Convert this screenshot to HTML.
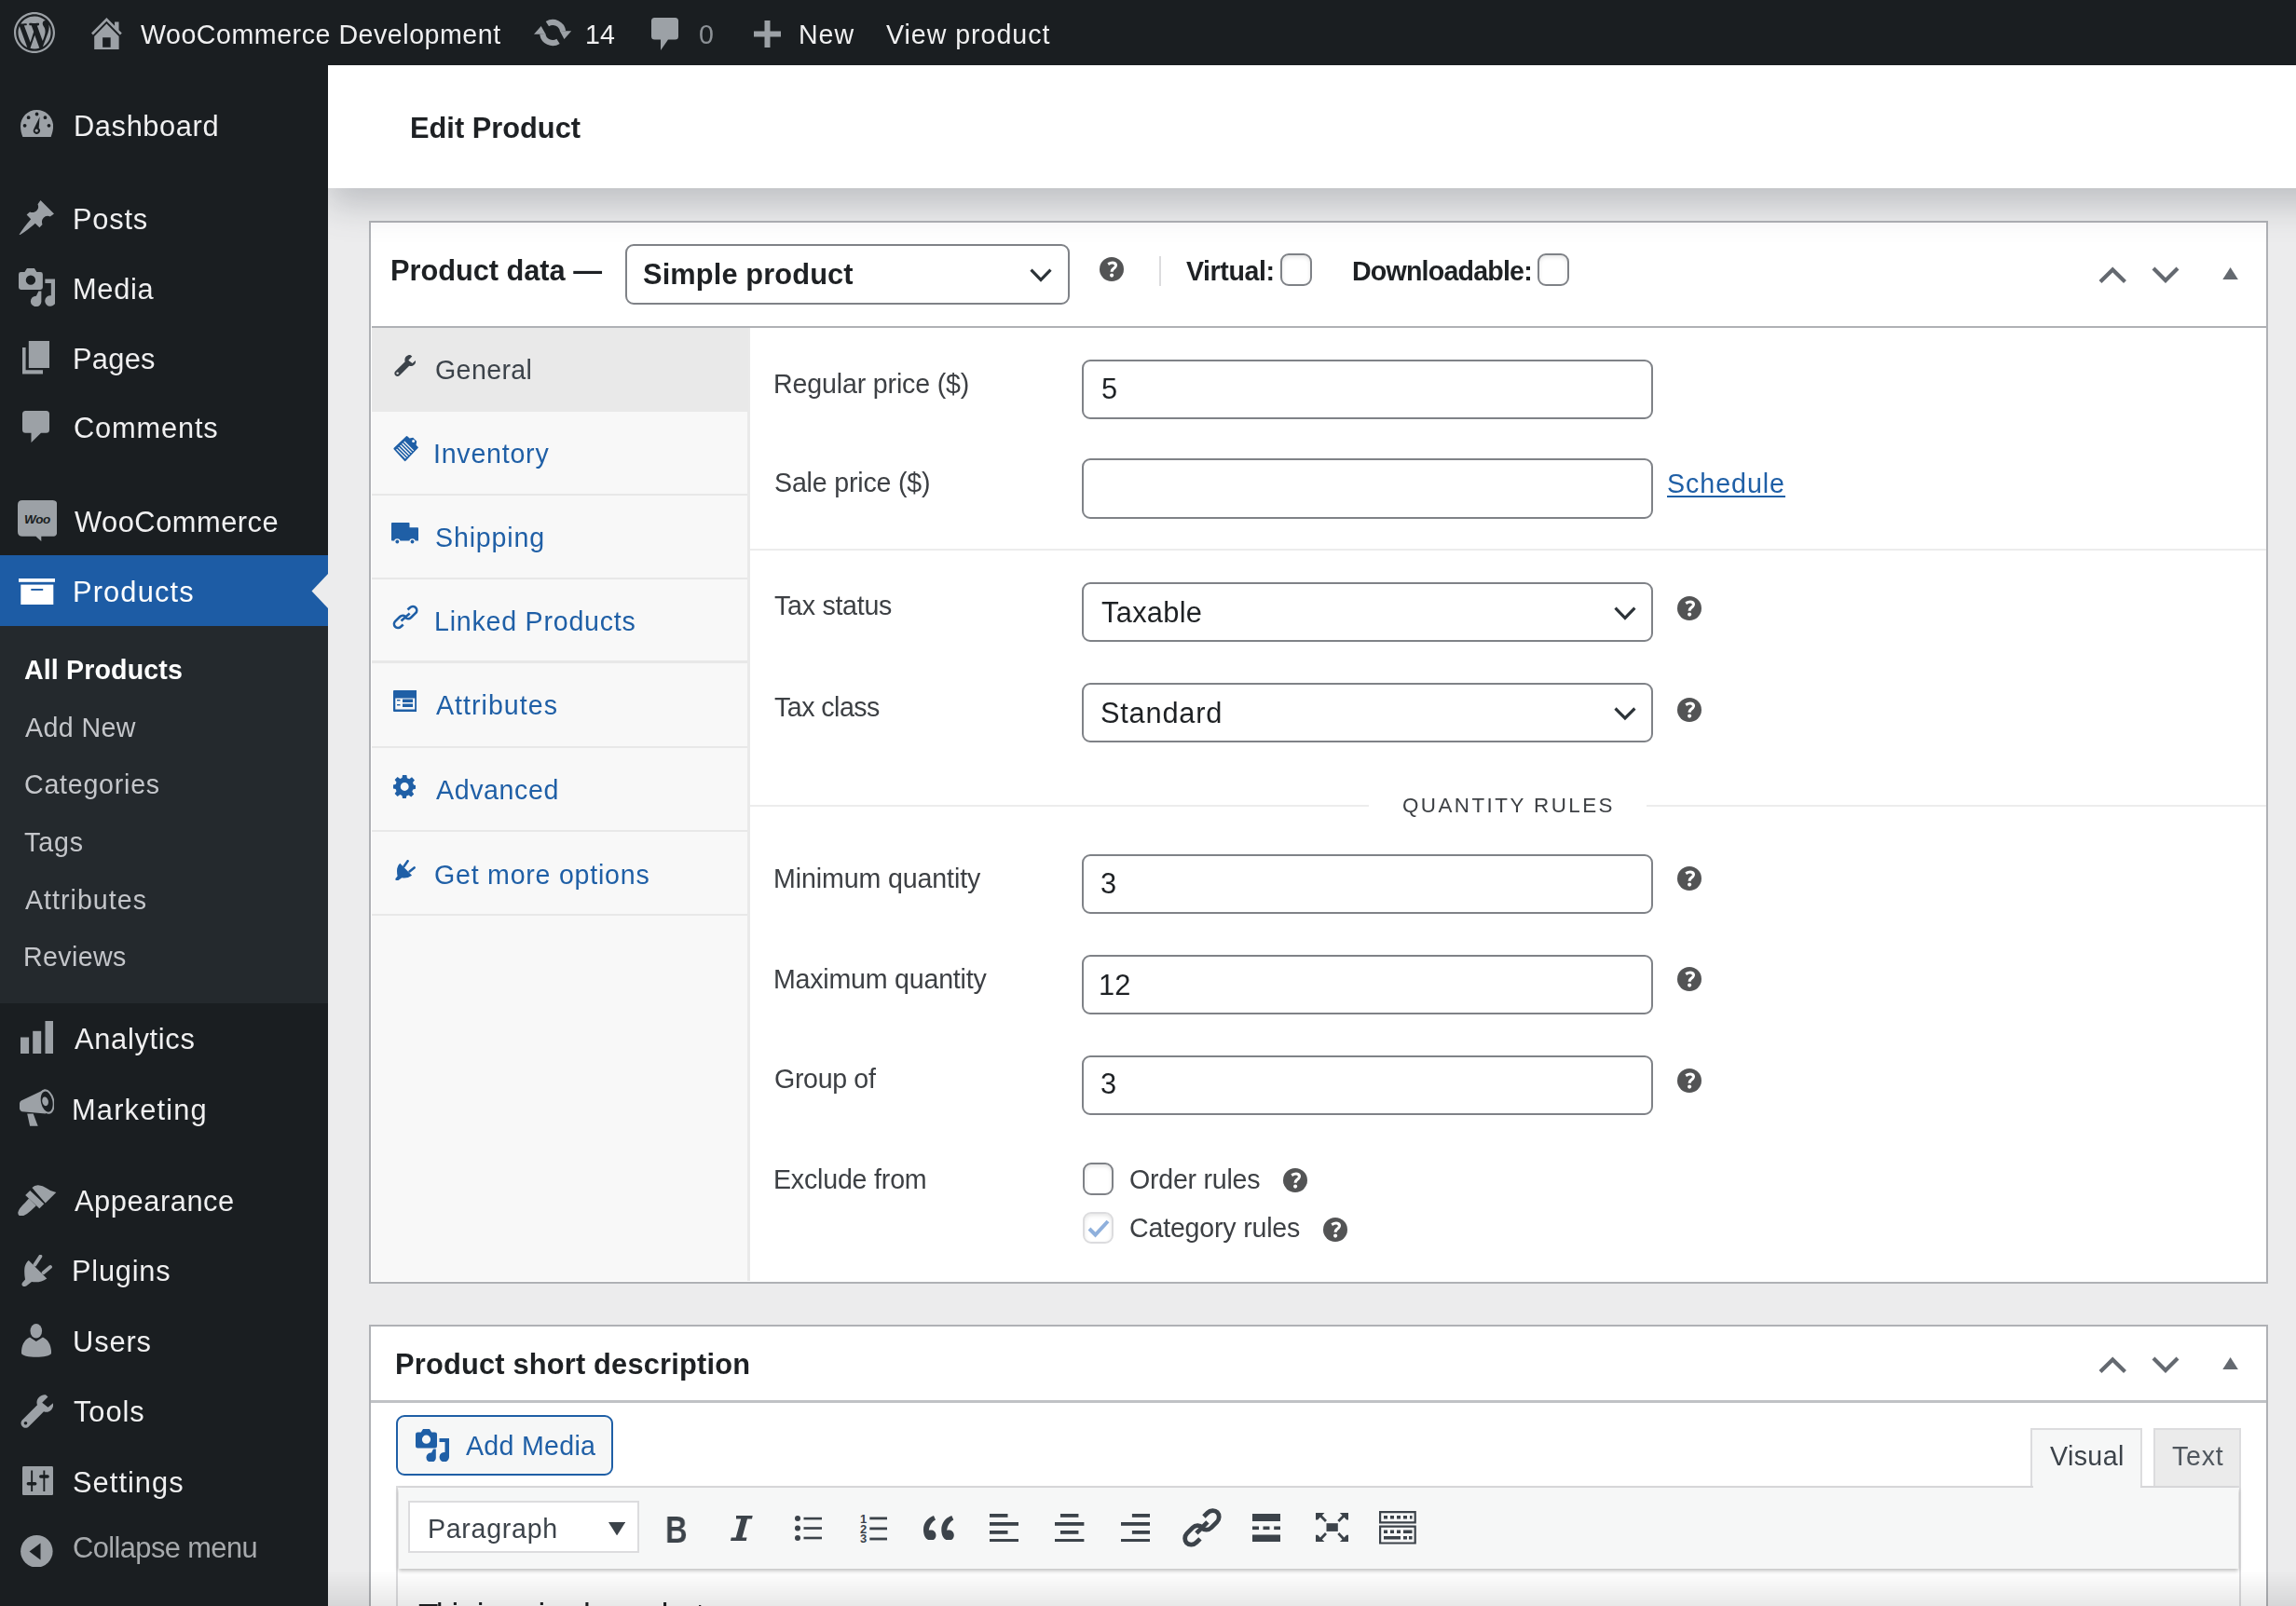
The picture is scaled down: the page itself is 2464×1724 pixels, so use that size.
<!DOCTYPE html>
<html><head><meta charset="utf-8"><style>
html,body{margin:0;padding:0;width:2464px;height:1724px;overflow:hidden;background:#ececed;font-family:"Liberation Sans",sans-serif}
.a{position:absolute;display:block}
.t{position:absolute;white-space:nowrap;line-height:1;will-change:transform}
</style></head><body>
<div style="position:absolute;left:0;top:0;z-index:10">
<div class="a" style="left:0.0px;top:0.0px;width:2464.0px;height:70.0px;background:#1a1e21"></div>
<div class="a" style="left:0.0px;top:70.0px;width:352.0px;height:1654.0px;background:#1a1e21"></div>
<div class="a" style="left:0.0px;top:672.0px;width:352.0px;height:404.5px;background:#24292d"></div>
<div class="a" style="left:0.0px;top:596.0px;width:352.0px;height:76.0px;background:#1d5ca5"></div>
<svg class="a" style="left:334px;top:616px;width:18px;height:37px" viewBox="0 0 18 37"><path d="M18 0 L0.5 18.5 L18 37 Z" fill="#ececed"/></svg>
<svg class="a" style="left:15.4px;top:12.8px;width:44.0px;height:44.0px;" viewBox="0 0 20 20" preserveAspectRatio="none" fill="#9ca1a6"><path d="M20 10c0-5.52-4.48-10-10-10S0 4.480 0 10s4.48 10 10 10 10-4.48 10-10zM10 1.01c4.970 0 8.99 4.02 8.99 8.99s-4.02 8.99-8.99 8.99S1.01 14.97 1.01 10 5.03 1.01 10 1.01zM8.01 14.82L4.96 6.61c.49-.03 1.05-.08 1.05-.08.43-.05.38-1.01-.06-.99 0 0-1.29.1-2.13.1-.15 0-.33 0-.52-.01 1.44-2.17 3.9-3.6 6.7-3.6 2.09 0 3.990.79 5.41 2.09-.6-.08-1.45.35-1.45 1.42 0 .66.38 1.22.79 1.88.31.54.5 1.22.5 2.21 0 1.34-1.27 4.48-1.27 4.48l-2.71-7.5c.48-.03.75-.16.75-.16.43-.05.38-1.1-.05-1.08 0 0-1.3.11-2.14.11-.78 0-2.11-.11-2.11-.11-.43-.02-.48 1.06-.05 1.08l.84.08 1.12 3.04zm6.02 2.15L16.64 10s.67-1.69.39-3.81c.63 1.14.94 2.42.94 3.81 0 2.96-1.56 5.58-3.94 6.970zM2.68 6.77L6.5 17.25c-2.67-1.3-4.47-4.08-4.47-7.25 0-1.16.2-2.23.65-3.23zm7.45 4.53l2.29 6.25c-.75.27-1.57.42-2.42.42-.72 0-1.41-.11-2.06-.3z"/></svg>
<svg class="a" style="left:97.8px;top:18.5px;width:32.8px;height:34.5px;" viewBox="0 0 33 34.5" preserveAspectRatio="none" fill="#9ca1a6"><path d="M16.5 0 L0 16.5 L1.9 18.4 L16.5 3.8 L31.1 18.4 L33 16.5 L29.7 13.2 L29.7 4.5 L25.2 4.5 L25.2 8.7 Z"/><path d="M16.5 6.6 L3.2 19.9 L3.2 34.5 L29.8 34.5 L29.8 19.9 Z M12.2 21.3 L20.8 21.3 L20.8 31.7 L12.2 31.7 Z" fill-rule="evenodd"/></svg>
<div class="t" style="left:150.9px;top:23.3px;font-size:28.6px;color:#f0f0f1;letter-spacing:0.53px;">WooCommerce Development</div>
<svg class="a" style="left:573.0px;top:19.9px;width:40.0px;height:30.1px;" viewBox="0 0 40 30" preserveAspectRatio="none" fill="#9ca1a6"><path d="M14.37 5.67 A11.0 11.0 0 0 1 31.09 13.47 M26.03 24.33 A11.0 11.0 0 0 1 9.31 16.53" fill="none" stroke="#9ca1a6" stroke-width="6.2"/><path d="M27.8 13.3 L40.2 13.3 L32.5 22 Z M12.6 16.7 L0 16.7 L7.7 8 Z"/></svg>
<div class="t" style="left:627.5px;top:22.8px;font-size:28.6px;color:#f0f0f1;letter-spacing:0.06px;">14</div>
<svg class="a" style="left:699.0px;top:19.0px;width:29.0px;height:35.0px;" viewBox="0 0 29 35" preserveAspectRatio="none" fill="#9ca1a6"><path d="M3.5 0 L25.5 0 Q29 0 29 3.5 L29 20 Q29 23.5 25.5 23.5 L18 23.5 L10 35 L10 23.5 L3.5 23.5 Q0 23.5 0 20 L0 3.5 Q0 0 3.5 0 Z"/></svg>
<div class="t" style="left:749.9px;top:22.8px;font-size:28.6px;color:#8c9196;">0</div>
<svg class="a" style="left:809.0px;top:22.0px;width:29.0px;height:29.0px;" viewBox="0 0 29 29" preserveAspectRatio="none" fill="#9ca1a6"><rect x="11.5" y="0" width="6" height="29"/><rect x="0" y="11.5" width="29" height="6"/></svg>
<div class="t" style="left:856.7px;top:22.8px;font-size:28.6px;color:#f0f0f1;letter-spacing:0.97px;">New</div>
<div class="t" style="left:950.9px;top:22.8px;font-size:28.6px;color:#f0f0f1;letter-spacing:0.96px;">View product</div>
<svg class="a" style="left:21.9px;top:118.3px;width:35.1px;height:28.9px;" viewBox="0 0 35 29" preserveAspectRatio="none" fill="#9ca1a6"><path fill-rule="evenodd" d="M17.5 0 C27.2 0 35 7.8 35 17.5 C35 21.6 34 25.5 32.6 29 L2.4 29 C1 25.5 0 21.6 0 17.5 C0 7.8 7.8 0 17.5 0 Z M17.5 2.6 A1.9 1.9 0 1 0 17.5 6.4 A1.9 1.9 0 1 0 17.5 2.6 Z M8.6 6.3 A1.9 1.9 0 1 0 8.6 10.1 A1.9 1.9 0 1 0 8.6 6.3 Z M26.4 6.3 A1.9 1.9 0 1 0 26.4 10.1 A1.9 1.9 0 1 0 26.4 6.3 Z M4.6 15 A1.9 1.9 0 1 0 4.6 18.8 A1.9 1.9 0 1 0 4.6 15 Z M30.4 15 A1.9 1.9 0 1 0 30.4 18.8 A1.9 1.9 0 1 0 30.4 15 Z M20.5 7.5 L19.6 19.5 A3.6 3.6 0 1 1 14 21 Z"/><circle cx="17.2" cy="22.3" r="1.6" fill="#9ca1a6"/></svg>
<div class="t" style="left:78.5px;top:120.5px;font-size:30.8px;color:#f0f0f1;letter-spacing:0.62px;">Dashboard</div>
<svg class="a" style="left:20.4px;top:214.6px;width:38.0px;height:37.9px;" viewBox="0 0 38 38" preserveAspectRatio="none" fill="#9ca1a6"><path d="M23.5 0 L38 14.5 L33.8 17.5 C31 16.2 28.5 17 26.8 18.8 C25 20.6 24.4 23.2 25.5 26 L22.4 29.4 L17.8 24.8 Q8 33.5 0 38 Q4.5 30 13.2 20.2 L8.6 15.6 L12 12.5 C14.8 13.6 17.4 13 19.2 11.2 C21 9.5 21.8 7 20.5 4.2 Z"/></svg>
<div class="t" style="left:77.9px;top:220.9px;font-size:30.8px;color:#f0f0f1;letter-spacing:0.79px;">Posts</div>
<svg class="a" style="left:19.7px;top:288.3px;width:39.8px;height:40.8px;" viewBox="0 0 40 41" preserveAspectRatio="none" fill="#9ca1a6"><path fill-rule="evenodd" d="M9 0 L17 0 L19.5 4 L23.5 4 Q26 4 26 6.5 L26 20.5 Q26 23 23.5 23 L2.5 23 Q0 23 0 20.5 L0 6.5 Q0 4 2.5 4 L6.5 4 Z M13 7.5 A5.2 5.2 0 1 0 13 17.9 A5.2 5.2 0 1 0 13 7.5 Z"/><path d="M28.5 11.5 L40 11.5 L40 35 A5.8 5.8 0 1 1 35 29.5 L35 16 L28.5 16 Z"/><path d="M21.5 24.5 L24.5 24.5 L24.5 35 A5.8 5.8 0 1 1 19 29.8 Z"/></svg>
<div class="t" style="left:77.9px;top:295.7px;font-size:30.8px;color:#f0f0f1;letter-spacing:0.71px;">Media</div>
<svg class="a" style="left:23.9px;top:366.0px;width:29.0px;height:35.5px;" viewBox="0 0 29 35.5" preserveAspectRatio="none" fill="#9ca1a6"><path d="M0 7 L3.6 7 L3.6 31.2 L22 31.2 L22 35.5 L0 35.5 Z"/><rect x="6.8" y="0" width="22.2" height="29"/></svg>
<div class="t" style="left:77.9px;top:370.8px;font-size:30.8px;color:#f0f0f1;letter-spacing:0.28px;">Pages</div>
<svg class="a" style="left:23.9px;top:441.4px;width:29.0px;height:34.1px;" viewBox="0 0 29 34" preserveAspectRatio="none" fill="#9ca1a6"><path d="M3.5 0 L25.5 0 Q29 0 29 3.5 L29 20.2 Q29 23.7 25.5 23.7 L20 23.7 L9.5 34 L9.5 23.7 L3.5 23.7 Q0 23.7 0 20.2 L0 3.5 Q0 0 3.5 0 Z"/></svg>
<div class="t" style="left:78.9px;top:445.0px;font-size:30.8px;color:#f0f0f1;letter-spacing:0.83px;">Comments</div>
<svg class="a" style="left:18.7px;top:536.9px;width:42.3px;height:44.1px;" viewBox="0 0 42.3 44" preserveAspectRatio="none" fill="#9ca1a6"><path d="M5 0 L37.3 0 Q42.3 0 42.3 5 L42.3 33.7 Q42.3 38.7 37.3 38.7 L25.3 38.7 L25.3 44 L19.5 38.7 L5 38.7 Q0 38.7 0 33.7 L0 5 Q0 0 5 0 Z"/><text x="21" y="25" text-anchor="middle" font-family="Liberation Sans" font-style="italic" font-weight="bold" font-size="13.5" fill="#1a1e21" letter-spacing="-0.3">Woo</text></svg>
<div class="t" style="left:79.8px;top:545.7px;font-size:30.8px;color:#f0f0f1;letter-spacing:0.53px;">WooCommerce</div>
<svg class="a" style="left:19.7px;top:620.8px;width:39.5px;height:28.2px;" viewBox="0 0 39.5 28.2" preserveAspectRatio="none" fill="#ffffff"><rect x="0" y="0" width="39.5" height="3.8"/><rect x="2.3" y="6.6" width="35" height="21.6"/><rect x="13.3" y="11" width="12.9" height="1.9" fill="#1d5ca5"/></svg>
<div class="t" style="left:77.5px;top:620.8px;font-size:30.8px;color:#ffffff;letter-spacing:1.15px;">Products</div>
<div class="t" style="left:26.3px;top:705.0px;font-size:28.6px;color:#ffffff;font-weight:bold;letter-spacing:0.13px;">All Products</div>
<div class="t" style="left:27.0px;top:767.1px;font-size:28.6px;color:#c4c6ca;letter-spacing:0.40px;">Add New</div>
<div class="t" style="left:25.6px;top:828.3px;font-size:28.6px;color:#c4c6ca;letter-spacing:0.76px;">Categories</div>
<div class="t" style="left:26.4px;top:889.9px;font-size:28.6px;color:#c4c6ca;letter-spacing:0.91px;">Tags</div>
<div class="t" style="left:27.0px;top:952.1px;font-size:28.6px;color:#c4c6ca;letter-spacing:1.02px;">Attributes</div>
<div class="t" style="left:24.7px;top:1013.3px;font-size:28.6px;color:#c4c6ca;letter-spacing:0.36px;">Reviews</div>
<svg class="a" style="left:21.7px;top:1096.2px;width:35.2px;height:35.3px;" viewBox="0 0 35.2 35.3" preserveAspectRatio="none" fill="#9ca1a6"><rect x="0" y="17.5" width="9.1" height="17.8"/><rect x="13.2" y="10.8" width="9" height="24.5"/><rect x="26.5" y="0" width="8.7" height="35.3"/></svg>
<div class="t" style="left:79.8px;top:1100.5px;font-size:30.8px;color:#f0f0f1;letter-spacing:0.70px;">Analytics</div>
<svg class="a" style="left:20.8px;top:1169.0px;width:37.2px;height:39.7px;" viewBox="0 0 37.2 39.7" preserveAspectRatio="none" fill="#9ca1a6"><path d="M1.8 12.5 L27 0.5 L28 26.5 L2.5 24.2 Q-0.3 23.5 -0.3 18.3 Q-0.3 13.5 1.8 12.5 Z"/><ellipse cx="29.2" cy="13.6" rx="8.2" ry="13.4" transform="rotate(-12 29.2 13.6)"/><ellipse cx="29.2" cy="13.6" rx="6.2" ry="11.2" transform="rotate(-12 29.2 13.6)" fill="#1a1e21"/><ellipse cx="27.6" cy="13.3" rx="3.3" ry="4.9" transform="rotate(-12 27.6 13.3)"/><path d="M8.2 26.5 L14.7 26.5 L19.7 39.7 L11.1 39.7 Z"/></svg>
<div class="t" style="left:77.3px;top:1177.0px;font-size:30.8px;color:#f0f0f1;letter-spacing:1.18px;">Marketing</div>
<svg class="a" style="left:19.4px;top:1271.5px;width:41.3px;height:33.8px;" viewBox="0 0 41.3 33.8" preserveAspectRatio="none" fill="#9ca1a6"><path d="M15.4 3.1 Q18 0 22 0.2 Q27 0.5 31 3.5 Q35 6.8 41.3 8.1 L29.7 19.6 Z"/><path d="M13.2 6 L8.2 11 L23.3 25.3 L28.3 20.3 Z"/><path d="M12 14.5 L19.8 22.3 L14 27.8 Q7.5 33.8 3.2 33.5 Q0 33 0.3 29.5 Q1 25.5 7.5 19.5 Z"/></svg>
<div class="t" style="left:79.8px;top:1275.4px;font-size:30.8px;color:#f0f0f1;letter-spacing:0.57px;">Appearance</div>
<svg class="a" style="left:22.7px;top:1346.8px;width:33.3px;height:34.4px;" viewBox="0 0 33.3 34.4" preserveAspectRatio="none" fill="#9ca1a6"><path d="M20.4 1.6 L14.4 10.6 M31 13 L23.6 19.2" stroke="#9ca1a6" stroke-width="3.8" stroke-linecap="round"/><path d="M7.8 5.9 L27.3 25.4 Q20 30.5 11 29 L5.2 33.4 Q2 35.2 0.6 32.5 Q-0.2 30.5 2.5 28.2 L4 26.5 Q2.8 20 3.4 14 Q4.3 8.8 7.8 5.9 Z"/></svg>
<div class="t" style="left:77.3px;top:1350.4px;font-size:30.8px;color:#f0f0f1;letter-spacing:0.77px;">Plugins</div>
<svg class="a" style="left:23.4px;top:1421.2px;width:32.1px;height:35.8px;" viewBox="0 0 32.1 35.8" preserveAspectRatio="none" fill="#9ca1a6"><ellipse cx="15.8" cy="7.8" rx="6.3" ry="7.8"/><path d="M0 31.5 C0 24 2.5 17.5 9 14.5 L15.8 19 L23 14.5 C29.5 17.5 32.1 24 32.1 31.5 C32.1 34.2 24 35.8 16 35.8 C8 35.8 0 34.2 0 31.5 Z"/></svg>
<div class="t" style="left:77.5px;top:1425.8px;font-size:30.8px;color:#f0f0f1;letter-spacing:0.90px;">Users</div>
<svg class="a" style="left:21.6px;top:1497.0px;width:35.4px;height:35.8px;" viewBox="0 0 35.4 35.8" preserveAspectRatio="none" fill="#9ca1a6"><path d="M27 0.3 C22.5 -0.5 17.5 3.5 17.5 8.5 C17.5 9.5 17.7 10.5 18 11.3 L2 27.3 C0 29.3 0 32.5 2 34.3 C4 36.3 7 36.3 9 34.3 L25 18.3 C26 18.7 26.9 18.8 28 18.8 C32.5 18.8 35.4 15 35.4 9 L29.5 13.8 L23.2 8.8 L29.5 2.5 Z"/><circle cx="5.5" cy="30.8" r="1.8" fill="#1a1e21"/></svg>
<div class="t" style="left:79.2px;top:1501.4px;font-size:30.8px;color:#f0f0f1;letter-spacing:0.94px;">Tools</div>
<svg class="a" style="left:24.0px;top:1574.4px;width:33.0px;height:31.1px;" viewBox="0 0 33 31.1" preserveAspectRatio="none" fill="#9ca1a6"><rect x="0" y="0" width="33" height="31.1" rx="1.5"/><rect x="9.2" y="4.5" width="1.9" height="22.5" fill="#1a1e21"/><rect x="22.4" y="4.5" width="1.9" height="22.5" fill="#1a1e21"/><rect x="4.6" y="17" width="10.8" height="3.5" rx="1.7" fill="#1a1e21"/><rect x="18" y="9.3" width="10.8" height="3.5" rx="1.7" fill="#1a1e21"/></svg>
<div class="t" style="left:78.4px;top:1576.7px;font-size:30.8px;color:#f0f0f1;letter-spacing:1.05px;">Settings</div>
<svg class="a" style="left:22.1px;top:1647.5px;width:34.7px;height:34.5px;" viewBox="0 0 34.7 34.5" preserveAspectRatio="none" fill="#9ca1a6"><circle cx="17.35" cy="17.25" r="17.25"/><path d="M9.5 17.5 L21.5 8.5 L21.5 26.5 Z" fill="#1a1e21"/></svg>
<div class="t" style="left:78.3px;top:1647.0px;font-size:30.8px;color:#a7aaad;letter-spacing:-0.57px;">Collapse menu</div>
</div>
<div class="a" style="left:396.0px;top:237.3px;width:2037.8px;height:1140.7px;background:#fff;border:2.2px solid #afb1b5;box-sizing:border-box"></div>
<div class="a" style="left:398.6px;top:349.8px;width:2033.0px;height:2.2px;background:#afb1b5"></div>
<div class="a" style="left:398.6px;top:352.0px;width:405.8px;height:1023.3px;background:#f8f8f8"></div>
<div class="a" style="left:802.4px;top:352.0px;width:2.2px;height:1023.3px;background:#eaeaea"></div>
<div class="a" style="left:398.6px;top:352.0px;width:404.8px;height:89.5px;background:#e9e9e9"></div>
<div class="a" style="left:398.6px;top:529.6px;width:403.8px;height:2.2px;background:#e8e8e8"></div>
<div class="a" style="left:398.6px;top:619.5px;width:403.8px;height:2.2px;background:#e8e8e8"></div>
<div class="a" style="left:398.6px;top:709.4px;width:403.8px;height:2.2px;background:#e8e8e8"></div>
<div class="a" style="left:398.6px;top:800.5px;width:403.8px;height:2.2px;background:#e8e8e8"></div>
<div class="a" style="left:398.6px;top:890.5px;width:403.8px;height:2.2px;background:#e8e8e8"></div>
<div class="a" style="left:398.6px;top:980.6px;width:403.8px;height:2.2px;background:#e8e8e8"></div>
<div class="a" style="left:804.6px;top:589.0px;width:1627.0px;height:2.2px;background:#ececec"></div>
<div class="a" style="left:804.6px;top:863.7px;width:664.2px;height:2.2px;background:#ececec"></div>
<div class="a" style="left:1767.2px;top:863.7px;width:664.4px;height:2.2px;background:#ececec"></div>
<div class="t" style="left:419.0px;top:275.7px;font-size:30.8px;color:#1e2124;font-weight:bold;letter-spacing:-0.05px;">Product data —</div>
<div class="a" style="left:670.6px;top:261.8px;width:477.7px;height:64.8px;background:#fff;border:2.2px solid #7f8287;border-radius:9px;box-sizing:border-box"></div>
<div class="t" style="left:689.8px;top:280.4px;font-size:30.8px;color:#1e2124;font-weight:bold;letter-spacing:0.11px;">Simple product</div>
<svg class="a" style="left:1105.0px;top:287.8px;width:24.0px;height:14.6px;overflow:visible" viewBox="0 0 24 14" preserveAspectRatio="none" fill="none"><path d="M1.5 1.5 L12 12 L22.5 1.5" fill="none" stroke="#2c3338" stroke-width="3.2"/></svg>
<svg class="a" style="left:1180.0px;top:275.5px;width:26px;height:26px" viewBox="0 0 26 26"><circle cx="13" cy="13" r="13" fill="#535455"/><path d="M9.2 7.6 Q12.5 5.6 15.3 6.2 Q18 7 17.3 9.6 Q16.8 11.2 14.8 12.6 Q13.1 13.9 13.1 15.8" fill="none" stroke="#fff" stroke-width="3.1"/><circle cx="13.1" cy="19.6" r="2.05" fill="#fff"/></svg>
<div class="a" style="left:1243.7px;top:275.0px;width:2.2px;height:31.8px;background:#dcdcde"></div>
<div class="t" style="left:1272.9px;top:277.0px;font-size:28.6px;color:#1e2124;font-weight:bold;letter-spacing:-0.44px;">Virtual:</div>
<div class="a" style="left:1374.4px;top:272.4px;width:34.0px;height:34.9px;background:#fff;border:2.2px solid #7f8287;border-radius:9px;box-sizing:border-box;box-shadow:inset 0 2px 4px rgba(0,0,0,0.1)"></div>
<div class="t" style="left:1450.6px;top:277.0px;font-size:28.6px;color:#1e2124;font-weight:bold;letter-spacing:-0.80px;">Downloadable:</div>
<div class="a" style="left:1650.3px;top:272.4px;width:34.0px;height:34.9px;background:#fff;border:2.2px solid #7f8287;border-radius:9px;box-sizing:border-box;box-shadow:inset 0 2px 4px rgba(0,0,0,0.1)"></div>
<svg class="a" style="left:2251.7px;top:286.5px;width:30.5px;height:17.5px;overflow:visible" viewBox="0 0 30.5 17.5" preserveAspectRatio="none" fill="none"><path d="M2 15.5 L15.25 2.5 L28.5 15.5" fill="none" stroke="#646970" stroke-width="4.2"/></svg>
<svg class="a" style="left:2309.0px;top:286.0px;width:30.0px;height:17.7px;overflow:visible" viewBox="0 0 30 17.7" preserveAspectRatio="none" fill="none"><path d="M2 2 L15 15 L28 2" fill="none" stroke="#646970" stroke-width="4.2"/></svg>
<svg class="a" style="left:2384.8px;top:286.5px;width:17.2px;height:13.5px;" viewBox="0 0 17.2 13.5" preserveAspectRatio="none" fill="#646970"><path d="M8.6 0 L17.2 13.5 L0 13.5 Z"/></svg>
<svg class="a" style="left:423.0px;top:381.0px;width:23.3px;height:22.7px;" viewBox="0 0 23.3 22.7" preserveAspectRatio="none" fill="#3c434a"><path d="M17.6 0.2 C14.6 -0.4 11.4 2.2 11.4 5.5 C11.4 6.1 11.5 6.8 11.7 7.3 L1.3 17.4 C0 18.7 0 20.8 1.3 22 C2.6 23.2 4.6 23.2 5.9 22 L16.2 11.7 C16.8 11.9 17.5 12 18.2 12 C21.2 12 23.3 9.5 23.3 5.8 L19.5 9 L15.3 5.7 L19.3 1.6 Z"/><circle cx="3.6" cy="19.6" r="1.2" fill="#e9e9e9"/></svg>
<div class="t" style="left:466.6px;top:383.3px;font-size:28.6px;color:#3c434a;letter-spacing:0.37px;">General</div>
<svg class="a" style="left:422.0px;top:468.0px;width:27.0px;height:27.7px;" viewBox="0 0 27 27.7" preserveAspectRatio="none" fill="#1f5fa6"><path d="M0.8 14.4 Q0 13.6 0.8 12.8 L14 0.3 Q14.7 -0.3 15.4 0.4 L17.6 2.6 L21.2 1.8 L25.2 5.8 L24.6 9.7 L26.5 11.7 Q27.2 12.4 26.5 13.1 L13.4 26.8 Q12.7 27.5 12 26.8 Z"/><path d="M3.55 14.15 L13.45 24.05 M5.60 12.10 L15.50 22.00 M7.65 10.05 L17.55 19.95 M9.70 8.00 L19.60 17.90 M11.75 5.95 L21.65 15.85 " stroke="#f8f8f8" stroke-width="1.3"/><circle cx="21.6" cy="5.4" r="1.5" fill="#f8f8f8"/></svg>
<div class="t" style="left:465.4px;top:473.4px;font-size:28.6px;color:#1f5fa6;letter-spacing:0.76px;">Inventory</div>
<svg class="a" style="left:420.0px;top:561.4px;width:29.0px;height:24.2px;" viewBox="0 0 29 24.2" preserveAspectRatio="none" fill="#1f5fa6"><rect x="0" y="0" width="19.5" height="19.5" rx="0.8"/><path d="M19 5.3 L28.2 5.3 Q29 5.3 29 6.2 L29 19.5 L19 19.5 Z"/><circle cx="6.3" cy="20.5" r="3.2" fill="#f8f8f8"/><circle cx="6.3" cy="20.5" r="1.9"/><circle cx="22.5" cy="20.5" r="3.2" fill="#f8f8f8"/><circle cx="22.5" cy="20.5" r="1.9"/></svg>
<div class="t" style="left:466.7px;top:563.1px;font-size:28.6px;color:#1f5fa6;letter-spacing:0.84px;">Shipping</div>
<svg class="a" style="left:423.0px;top:651.3px;width:24.2px;height:23.0px;overflow:visible" viewBox="0 0 24.2 23" preserveAspectRatio="none" fill="none"><path d="M14.5 3.5 L17 1.2 C18.8 -0.5 21.8 -0.3 23.2 1.4 C24.7 3.1 24.6 5.6 23 7.2 L18 12 C16.3 13.6 13.8 13.6 12.3 12.1" fill="none" stroke="#1f5fa6" stroke-width="2.6"/><path d="M9.7 19.5 L7.2 21.8 C5.4 23.5 2.4 23.3 1 21.6 C-0.5 19.9 -0.4 17.4 1.2 15.8 L6.2 11 C7.9 9.4 10.4 9.4 11.9 10.9" fill="none" stroke="#1f5fa6" stroke-width="2.6"/><path d="M7.5 15.5 L16.7 7.5" stroke="#1f5fa6" stroke-width="2.6"/></svg>
<div class="t" style="left:465.7px;top:652.5px;font-size:28.6px;color:#1f5fa6;letter-spacing:0.77px;">Linked Products</div>
<svg class="a" style="left:421.6px;top:740.8px;width:25.5px;height:23.0px;" viewBox="0 0 25.5 23" preserveAspectRatio="none" fill="#1f5fa6"><path fill-rule="evenodd" d="M0 1 Q0 0 1 0 L24.5 0 Q25.5 0 25.5 1 L25.5 22 Q25.5 23 24.5 23 L1 23 Q0 23 0 22 Z M2.3 8.5 L2.3 20.5 L23.2 20.5 L23.2 8.5 Z"/><rect x="4" y="10" width="3.5" height="1.4"/><rect x="4" y="15" width="3.5" height="1.4"/><rect x="10" y="9.5" width="11" height="3.5"/><rect x="10" y="14.5" width="11" height="3.5"/></svg>
<div class="t" style="left:467.6px;top:743.3px;font-size:28.6px;color:#1f5fa6;letter-spacing:1.02px;">Attributes</div>
<svg class="a" style="left:421.6px;top:831.9px;width:24.4px;height:24.9px;" viewBox="0 0 24.4 24.9" preserveAspectRatio="none" fill="#1f5fa6"><path fill-rule="evenodd" d="M10 0 L14.4 0 L14.9 3.3 L17.3 4.3 L20 2.3 L23 5.4 L21 8.1 L22 10.5 L24.4 11 L24.4 14.8 L21.2 15.4 L20.3 17.7 L22.2 20.4 L19.2 23.4 L16.5 21.5 L14.3 22.4 L13.8 24.9 L10 24.9 L9.4 22 L7.3 21.1 L4.6 23 L1.6 20 L3.5 17.3 L2.6 15 L0 14.5 L0 10.5 L2.6 10 L3.5 7.7 L1.6 5 L4.6 2 L7.3 3.9 L9.5 3 Z M12.2 8 A4.4 4.4 0 1 0 12.2 16.9 A4.4 4.4 0 1 0 12.2 8 Z"/></svg>
<div class="t" style="left:467.6px;top:834.4px;font-size:28.6px;color:#1f5fa6;letter-spacing:0.59px;">Advanced</div>
<svg class="a" style="left:423.5px;top:922.7px;width:22.1px;height:22.2px;" viewBox="0 0 22.1 22.2" preserveAspectRatio="none" fill="#1f5fa6"><path d="M13.6 1.3 L9.6 6.9 M20.6 8.4 L15.6 12.4" stroke="#1f5fa6" stroke-width="2.6" stroke-linecap="round"/><path d="M5.2 3.8 L18.1 16.7 Q13.3 20.3 7.3 19.2 L3.5 22 Q1.4 23.2 0.5 21.5 Q-0.1 20.3 1.6 18.8 L2.6 17.6 Q1.7 13.3 2.2 9.3 Q2.8 5.9 5.2 3.8 Z"/></svg>
<div class="t" style="left:466.2px;top:924.5px;font-size:28.6px;color:#1f5fa6;letter-spacing:0.76px;">Get more options</div>
<div class="t" style="left:829.6px;top:397.9px;font-size:28.6px;color:#3d4044;letter-spacing:-0.16px;">Regular price ($)</div>
<div class="a" style="left:1161.4px;top:385.6px;width:612.8px;height:64.8px;background:#fff;border:2.2px solid #7f8287;border-radius:9px;box-sizing:border-box"></div>
<div class="t" style="left:1181.6px;top:403.4px;font-size:30.8px;color:#1e2124;">5</div>
<div class="t" style="left:830.6px;top:504.3px;font-size:28.6px;color:#3d4044;letter-spacing:-0.19px;">Sale price ($)</div>
<div class="a" style="left:1161.4px;top:492.3px;width:612.8px;height:64.8px;background:#fff;border:2.2px solid #7f8287;border-radius:9px;box-sizing:border-box"></div>
<div class="t" style="left:1788.9px;top:505.4px;font-size:28.6px;color:#1f5fa6;letter-spacing:0.97px;text-decoration:underline;text-decoration-thickness:2px;text-underline-offset:3px;">Schedule</div>
<div class="t" style="left:831.4px;top:635.7px;font-size:28.6px;color:#3d4044;letter-spacing:-0.26px;">Tax status</div>
<div class="a" style="left:1161.4px;top:624.5px;width:612.8px;height:64.7px;background:#fff;border:2.2px solid #7f8287;border-radius:9px;box-sizing:border-box"></div>
<div class="t" style="left:1182.2px;top:643.0px;font-size:30.8px;color:#1e2124;letter-spacing:0.30px;">Taxable</div>
<svg class="a" style="left:1731.6px;top:651.0px;width:23.9px;height:14.5px;overflow:visible" viewBox="0 0 24 14" preserveAspectRatio="none" fill="none"><path d="M1.5 1.5 L12 12 L22.5 1.5" fill="none" stroke="#2c3338" stroke-width="3.2"/></svg>
<svg class="a" style="left:1799.7px;top:640.2px;width:26px;height:26px" viewBox="0 0 26 26"><circle cx="13" cy="13" r="13" fill="#535455"/><path d="M9.2 7.6 Q12.5 5.6 15.3 6.2 Q18 7 17.3 9.6 Q16.8 11.2 14.8 12.6 Q13.1 13.9 13.1 15.8" fill="none" stroke="#fff" stroke-width="3.1"/><circle cx="13.1" cy="19.6" r="2.05" fill="#fff"/></svg>
<div class="t" style="left:831.4px;top:744.8px;font-size:28.6px;color:#3d4044;letter-spacing:-0.53px;">Tax class</div>
<div class="a" style="left:1161.4px;top:732.5px;width:612.8px;height:64.7px;background:#fff;border:2.2px solid #7f8287;border-radius:9px;box-sizing:border-box"></div>
<div class="t" style="left:1180.6px;top:750.7px;font-size:30.8px;color:#1e2124;letter-spacing:0.76px;">Standard</div>
<svg class="a" style="left:1731.6px;top:759.4px;width:23.9px;height:14.0px;overflow:visible" viewBox="0 0 24 14" preserveAspectRatio="none" fill="none"><path d="M1.5 1.5 L12 12 L22.5 1.5" fill="none" stroke="#2c3338" stroke-width="3.2"/></svg>
<svg class="a" style="left:1799.7px;top:748.5px;width:26px;height:26px" viewBox="0 0 26 26"><circle cx="13" cy="13" r="13" fill="#535455"/><path d="M9.2 7.6 Q12.5 5.6 15.3 6.2 Q18 7 17.3 9.6 Q16.8 11.2 14.8 12.6 Q13.1 13.9 13.1 15.8" fill="none" stroke="#fff" stroke-width="3.1"/><circle cx="13.1" cy="19.6" r="2.05" fill="#fff"/></svg>
<div class="t" style="left:1504.7px;top:854.2px;font-size:22.4px;color:#3d4044;letter-spacing:2.45px;">QUANTITY RULES</div>
<div class="t" style="left:829.7px;top:928.5px;font-size:28.6px;color:#3d4044;letter-spacing:-0.12px;">Minimum quantity</div>
<div class="a" style="left:1161.4px;top:916.7px;width:612.8px;height:64.3px;background:#fff;border:2.2px solid #7f8287;border-radius:9px;box-sizing:border-box"></div>
<div class="t" style="left:1181.1px;top:934.4px;font-size:30.8px;color:#1e2124;">3</div>
<svg class="a" style="left:1799.5px;top:930.4px;width:26px;height:26px" viewBox="0 0 26 26"><circle cx="13" cy="13" r="13" fill="#535455"/><path d="M9.2 7.6 Q12.5 5.6 15.3 6.2 Q18 7 17.3 9.6 Q16.8 11.2 14.8 12.6 Q13.1 13.9 13.1 15.8" fill="none" stroke="#fff" stroke-width="3.1"/><circle cx="13.1" cy="19.6" r="2.05" fill="#fff"/></svg>
<div class="t" style="left:829.7px;top:1037.1px;font-size:28.6px;color:#3d4044;letter-spacing:-0.22px;">Maximum quantity</div>
<div class="a" style="left:1161.4px;top:1024.6px;width:612.8px;height:64.4px;background:#fff;border:2.2px solid #7f8287;border-radius:9px;box-sizing:border-box"></div>
<div class="t" style="left:1178.7px;top:1042.8px;font-size:30.8px;color:#1e2124;">12</div>
<svg class="a" style="left:1799.5px;top:1038.4px;width:26px;height:26px" viewBox="0 0 26 26"><circle cx="13" cy="13" r="13" fill="#535455"/><path d="M9.2 7.6 Q12.5 5.6 15.3 6.2 Q18 7 17.3 9.6 Q16.8 11.2 14.8 12.6 Q13.1 13.9 13.1 15.8" fill="none" stroke="#fff" stroke-width="3.1"/><circle cx="13.1" cy="19.6" r="2.05" fill="#fff"/></svg>
<div class="t" style="left:830.6px;top:1144.3px;font-size:28.6px;color:#3d4044;letter-spacing:-0.34px;">Group of</div>
<div class="a" style="left:1161.4px;top:1132.7px;width:612.8px;height:64.5px;background:#fff;border:2.2px solid #7f8287;border-radius:9px;box-sizing:border-box"></div>
<div class="t" style="left:1181.1px;top:1149.4px;font-size:30.8px;color:#1e2124;">3</div>
<svg class="a" style="left:1799.5px;top:1146.7px;width:26px;height:26px" viewBox="0 0 26 26"><circle cx="13" cy="13" r="13" fill="#535455"/><path d="M9.2 7.6 Q12.5 5.6 15.3 6.2 Q18 7 17.3 9.6 Q16.8 11.2 14.8 12.6 Q13.1 13.9 13.1 15.8" fill="none" stroke="#fff" stroke-width="3.1"/><circle cx="13.1" cy="19.6" r="2.05" fill="#fff"/></svg>
<div class="t" style="left:829.7px;top:1252.0px;font-size:28.6px;color:#3d4044;letter-spacing:-0.20px;">Exclude from</div>
<div class="a" style="left:1161.9px;top:1248.3px;width:33.5px;height:35.1px;background:#fff;border:2.2px solid #7f8287;border-radius:9px;box-sizing:border-box;box-shadow:inset 0 2px 4px rgba(0,0,0,0.1)"></div>
<div class="t" style="left:1211.7px;top:1252.0px;font-size:28.6px;color:#3d4044;letter-spacing:-0.25px;">Order rules</div>
<svg class="a" style="left:1377.0px;top:1254.4px;width:26px;height:26px" viewBox="0 0 26 26"><circle cx="13" cy="13" r="13" fill="#535455"/><path d="M9.2 7.6 Q12.5 5.6 15.3 6.2 Q18 7 17.3 9.6 Q16.8 11.2 14.8 12.6 Q13.1 13.9 13.1 15.8" fill="none" stroke="#fff" stroke-width="3.1"/><circle cx="13.1" cy="19.6" r="2.05" fill="#fff"/></svg>
<div class="a" style="left:1161.9px;top:1301.0px;width:33.5px;height:34.2px;background:#fff;border:2.2px solid #dcdcde;border-radius:9px;box-sizing:border-box;box-shadow:inset 0 2px 4px rgba(0,0,0,0.1)"></div>
<svg class="a" style="left:1166.0px;top:1307.0px;width:26.0px;height:23.0px;overflow:visible" viewBox="0 0 26 23" preserveAspectRatio="none" fill="none"><path d="M3 12 L9.5 18.5 L23 4" fill="none" stroke="#8fb0dc" stroke-width="4"/></svg>
<div class="t" style="left:1211.6px;top:1303.9px;font-size:28.6px;color:#3d4044;letter-spacing:-0.20px;">Category rules</div>
<svg class="a" style="left:1419.6px;top:1306.5px;width:26px;height:26px" viewBox="0 0 26 26"><circle cx="13" cy="13" r="13" fill="#535455"/><path d="M9.2 7.6 Q12.5 5.6 15.3 6.2 Q18 7 17.3 9.6 Q16.8 11.2 14.8 12.6 Q13.1 13.9 13.1 15.8" fill="none" stroke="#fff" stroke-width="3.1"/><circle cx="13.1" cy="19.6" r="2.05" fill="#fff"/></svg>
<div class="a" style="left:396.0px;top:1421.8px;width:2037.8px;height:338.2px;background:#fff;border:2.2px solid #afb1b5;box-sizing:border-box"></div>
<div class="a" style="left:398.2px;top:1503.4px;width:2033.4px;height:2.2px;background:#c0c2c5"></div>
<div class="t" style="left:423.9px;top:1449.7px;font-size:30.8px;color:#1e2124;font-weight:bold;letter-spacing:0.19px;">Product short description</div>
<svg class="a" style="left:2251.7px;top:1456.5px;width:30.5px;height:17.5px;overflow:visible" viewBox="0 0 30.5 17.5" preserveAspectRatio="none" fill="none"><path d="M2 15.5 L15.25 2.5 L28.5 15.5" fill="none" stroke="#646970" stroke-width="4.2"/></svg>
<svg class="a" style="left:2309.0px;top:1456.0px;width:30.0px;height:17.7px;overflow:visible" viewBox="0 0 30 17.7" preserveAspectRatio="none" fill="none"><path d="M2 2 L15 15 L28 2" fill="none" stroke="#646970" stroke-width="4.2"/></svg>
<svg class="a" style="left:2384.8px;top:1456.5px;width:17.2px;height:13.5px;" viewBox="0 0 17.2 13.5" preserveAspectRatio="none" fill="#646970"><path d="M8.6 0 L17.2 13.5 L0 13.5 Z"/></svg>
<div class="a" style="left:425.4px;top:1519.3px;width:232.2px;height:64.8px;background:#f6f7f7;border:2.2px solid #1f5fa6;border-radius:9px;box-sizing:border-box"></div>
<svg class="a" style="left:446.0px;top:1534.0px;width:36.0px;height:35.3px;" viewBox="0 0 36 35.3" preserveAspectRatio="none" fill="#1f5fa6"><path fill-rule="evenodd" d="M8 0 L15 0 L17.2 3.5 L20.8 3.5 Q23 3.5 23 5.7 L23 18.3 Q23 20.5 20.8 20.5 L2.2 20.5 Q0 20.5 0 18.3 L0 5.7 Q0 3.5 2.2 3.5 L5.8 3.5 Z M11.5 6.6 A4.6 4.6 0 1 0 11.5 15.8 A4.6 4.6 0 1 0 11.5 6.6 Z"/><path d="M25.5 10 L36 10 L36 30 A5.2 5.2 0 1 1 31.5 25 L31.5 14 L25.5 14 Z"/><path d="M19 21.5 L21.8 21.5 L21.8 30 A5.2 5.2 0 1 1 17 25.4 Z"/></svg>
<div class="t" style="left:500.2px;top:1538.0px;font-size:28.6px;color:#1f5fa6;letter-spacing:0.29px;">Add Media</div>
<div class="a" style="left:2179.3px;top:1532.5px;width:119.5px;height:64.5px;background:#f6f7f7;border:2.2px solid #dcdcde;border-bottom:none;box-sizing:border-box"></div>
<div class="a" style="left:2310.5px;top:1532.5px;width:94.2px;height:62.5px;background:#ebebeb;border:2.2px solid #dcdcde;border-bottom:none;box-sizing:border-box"></div>
<div class="t" style="left:2200.4px;top:1549.4px;font-size:28.6px;color:#3c434a;letter-spacing:0.39px;">Visual</div>
<div class="t" style="left:2330.7px;top:1549.4px;font-size:28.6px;color:#50575e;letter-spacing:0.73px;">Text</div>
<div class="a" style="left:425.4px;top:1594.7px;width:1979.3px;height:165.3px;background:#fff;border:2.2px solid #dcdcde;box-sizing:border-box"></div>
<div class="a" style="left:427.6px;top:1596.9px;width:1974.9px;height:87.1px;background:#f6f7f7;box-shadow:0 2.2px 4.4px rgba(0,0,0,0.28)"></div>
<div class="a" style="left:2181.5px;top:1594.0px;width:115.1px;height:4.0px;background:#f6f7f7"></div>
<div class="t" style="left:449.0px;top:1715.9px;font-size:35px;color:#1e2124;letter-spacing:-2.63px;">This is a simple product.</div>
<div class="a" style="left:438.0px;top:1611.0px;width:247.7px;height:56.3px;background:#fff;border:2.2px solid #dcdcde;box-sizing:border-box"></div>
<div class="t" style="left:458.7px;top:1626.6px;font-size:28.6px;color:#3c434a;letter-spacing:0.70px;">Paragraph</div>
<svg class="a" style="left:652.8px;top:1634.0px;width:18.2px;height:14.4px;" viewBox="0 0 18 14.4" preserveAspectRatio="none" fill="#3c434a"><path d="M0 0 L18 0 L9 14.4 Z"/></svg>
<div class="t" style="left:714.2px;top:1622.1px;font-size:40px;color:#3c434a;font-weight:bold;transform:scaleX(0.82);transform-origin:0.0px 0;">B</div>
<svg class="a" style="left:784.3px;top:1627.4px;width:23.7px;height:27.0px;" viewBox="0 0 23.7 27" preserveAspectRatio="none" fill="#3c434a"><path d="M6 0 L23.7 0 L23 3.5 L18 3.5 L12.5 23.5 L17.5 23.5 L16.8 27 L0 27 L0.7 23.5 L5.7 23.5 L11.2 3.5 L6 3.5 Z"/></svg>
<svg class="a" style="left:852.6px;top:1627.4px;width:29.7px;height:27.0px;" viewBox="0 0 29.7 27" preserveAspectRatio="none" fill="#3c434a"><circle cx="3" cy="3" r="3"/><circle cx="3" cy="13.5" r="3"/><circle cx="3" cy="24" r="3"/><rect x="9.5" y="1.8" width="20.2" height="2.6"/><rect x="9.5" y="12.2" width="20.2" height="2.6"/><rect x="9.5" y="22.7" width="20.2" height="2.6"/></svg>
<svg class="a" style="left:922.8px;top:1624.2px;width:29.7px;height:32.0px;" viewBox="0 0 29.7 32" preserveAspectRatio="none" fill="#3c434a"><text x="0" y="10.6" font-family="Liberation Sans" font-weight="bold" font-size="13">1</text><text x="0" y="21.6" font-family="Liberation Sans" font-weight="bold" font-size="13">2</text><text x="0" y="32" font-family="Liberation Sans" font-weight="bold" font-size="13">3</text><rect x="10.3" y="4.5" width="19" height="2.8"/><rect x="10.3" y="15.5" width="19" height="2.8"/><rect x="10.3" y="26.6" width="19" height="2.8"/></svg>
<svg class="a" style="left:991.4px;top:1626.7px;width:32.8px;height:26.6px;" viewBox="0 0 32.8 26.6" preserveAspectRatio="none" fill="#3c434a"><path d="M11 0 C5 2 0 7.5 0 15 C0 22 3 26.6 8 26.6 C11.5 26.6 13.5 24 13.5 21 C13.5 17.5 11 15.5 8 15.5 C7 15.5 6.3 15.6 5.8 15.8 C6.5 10 10 6 13 4.5 Z"/><path d="M30.3 0 C24.3 2 19.3 7.5 19.3 15 C19.3 22 22.3 26.6 27.3 26.6 C30.8 26.6 32.8 24 32.8 21 C32.8 17.5 30.3 15.5 27.3 15.5 C26.3 15.5 25.6 15.6 25.1 15.8 C25.8 10 29.3 6 32.3 4.5 Z"/></svg>
<svg class="a" style="left:1061.6px;top:1624.7px;width:31.4px;height:30.8px;" viewBox="0 0 31.4 30.8" preserveAspectRatio="none" fill="#3c434a"><rect x="0" y="0" width="19.5" height="3.8"/><rect x="0" y="9" width="31.4" height="3.8"/><rect x="0" y="18" width="19.5" height="3.8"/><rect x="0" y="27" width="31.4" height="3.8"/></svg>
<svg class="a" style="left:1132.3px;top:1624.7px;width:31.4px;height:30.8px;" viewBox="0 0 31.4 30.8" preserveAspectRatio="none" fill="#3c434a"><rect x="5.949999999999999" y="0" width="19.5" height="3.8"/><rect x="0.0" y="9" width="31.4" height="3.8"/><rect x="5.949999999999999" y="18" width="19.5" height="3.8"/><rect x="0.0" y="27" width="31.4" height="3.8"/></svg>
<svg class="a" style="left:1202.8px;top:1624.7px;width:31.4px;height:30.8px;" viewBox="0 0 31.4 30.8" preserveAspectRatio="none" fill="#3c434a"><rect x="11.899999999999999" y="0" width="19.5" height="3.8"/><rect x="0.0" y="9" width="31.4" height="3.8"/><rect x="11.899999999999999" y="18" width="19.5" height="3.8"/><rect x="0.0" y="27" width="31.4" height="3.8"/></svg>
<svg class="a" style="left:1270.5px;top:1621.0px;width:37.9px;height:37.8px;overflow:visible" viewBox="0 0 38 38" preserveAspectRatio="none" fill="none"><path d="M21 7 L25 3 C28 0 33 0 35.5 2.5 C38 5 38 10 35 13 L29 19 C26 22 21.5 22 19 19.5" fill="none" stroke="#3c434a" stroke-width="4.8"/><path d="M17 31 L13 35 C10 38 5 38 2.5 35.5 C0 33 0 28 3 25 L9 19 C12 16 16.5 16 19 18.5" fill="none" stroke="#3c434a" stroke-width="4.8"/><path d="M13 25 L25 13" stroke="#3c434a" stroke-width="4.8"/></svg>
<svg class="a" style="left:1343.8px;top:1624.7px;width:30.2px;height:30.6px;" viewBox="0 0 30.2 30.6" preserveAspectRatio="none" fill="#3c434a"><rect x="0" y="0" width="30.2" height="8"/><rect x="0" y="13.5" width="7" height="3.6"/><rect x="11.5" y="13.5" width="7" height="3.6"/><rect x="23.2" y="13.5" width="7" height="3.6"/><rect x="0" y="22.5" width="30.2" height="8.1"/></svg>
<svg class="a" style="left:1411.5px;top:1624.2px;width:35.3px;height:31.1px;" viewBox="0 0 35.3 31.1" preserveAspectRatio="none" fill="#3c434a"><rect x="11.5" y="11.2" width="12.3" height="8.7"/><path d="M0 0 L9.5 0 L6.8 2.7 L12 8 L10 10 L4.8 4.7 L2.2 7.4 L0 7.4 Z"/><path d="M35.3 0 L25.8 0 L28.5 2.7 L23.3 8 L25.3 10 L30.5 4.7 L33.1 7.4 L35.3 7.4 Z"/><path d="M0 31.1 L9.5 31.1 L6.8 28.4 L12 23.1 L10 21.1 L4.8 26.4 L2.2 23.7 L0 23.7 Z"/><path d="M35.3 31.1 L25.8 31.1 L28.5 28.4 L23.3 23.1 L25.3 21.1 L30.5 26.4 L33.1 23.7 L35.3 23.7 Z"/></svg>
<svg class="a" style="left:1480.0px;top:1622.0px;width:39.8px;height:35.6px;" viewBox="0 0 39.8 35.6" preserveAspectRatio="none" fill="#3c434a"><path fill-rule="evenodd" d="M0 0 L39.8 0 L39.8 13.5 L0 13.5 Z M2.2 2.2 L2.2 11.3 L37.6 11.3 L37.6 2.2 Z"/><path fill-rule="evenodd" d="M0 15.5 L39.8 15.5 L39.8 35.6 L0 35.6 Z M2.2 17.7 L2.2 33.4 L37.6 33.4 L37.6 17.7 Z"/><rect x="5" y="5" width="4" height="3.5"/><rect x="12" y="5" width="4" height="3.5"/><rect x="19" y="5" width="4" height="3.5"/><rect x="26" y="5" width="4" height="3.5"/><rect x="33" y="5" width="2.5" height="3.5"/><rect x="5" y="20.5" width="4" height="3.5"/><rect x="12" y="20.5" width="4" height="3.5"/><rect x="19" y="20.5" width="4" height="3.5"/><rect x="26" y="20.5" width="9.5" height="3.5"/><rect x="5" y="27" width="18" height="3.5"/><rect x="26" y="27" width="4" height="3.5"/><rect x="32" y="27" width="3.5" height="3.5"/></svg>
<div class="a" style="left:352.0px;top:70.0px;width:2348.0px;height:132.0px;background:#fff;box-shadow:0 17.6px 35.2px rgba(85,93,102,0.3);z-index:5"></div>
<div class="t" style="left:439.6px;top:122.7px;font-size:30.8px;color:#1e2124;font-weight:bold;z-index:6;">Edit Product</div>
<div class="a" style="left:352.0px;top:1686.0px;width:2112.0px;height:38.0px;background:linear-gradient(rgba(0,0,0,0),rgba(0,0,0,0.09));z-index:7"></div>
</body></html>
